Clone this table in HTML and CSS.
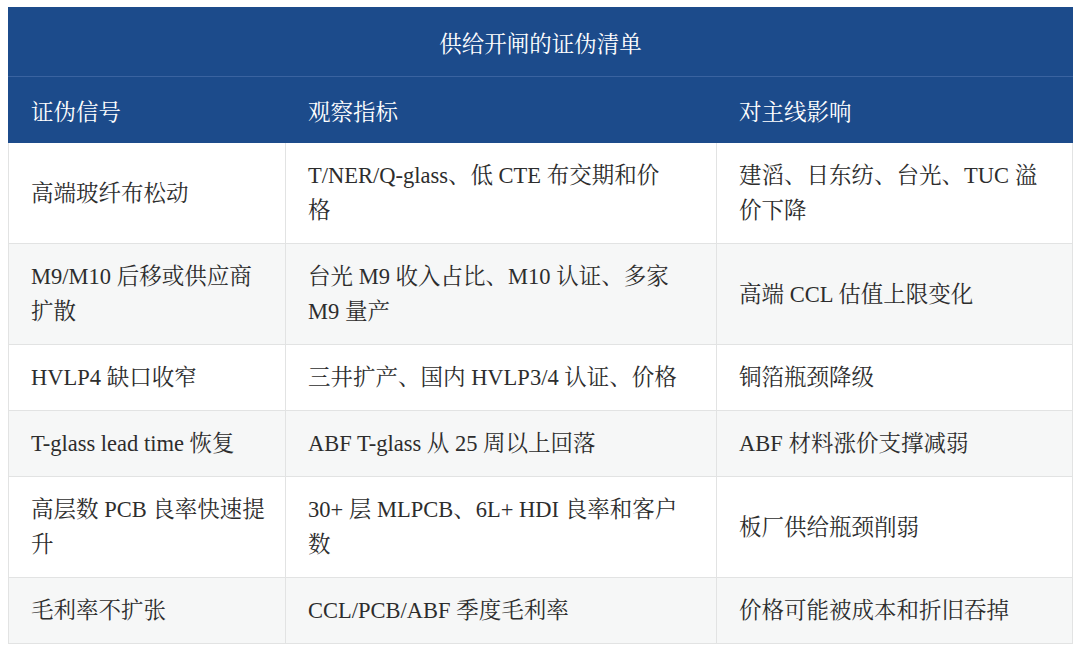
FILE: index.html
```html
<!DOCTYPE html>
<html lang="zh">
<head>
<meta charset="utf-8">
<link rel="stylesheet" href="styles.css">
</head>
<body>
<table class="tbl">
  <colgroup>
    <col class="c1"><col class="c2"><col class="c3">
  </colgroup>
  <thead>
    <tr class="title-row"><th colspan="3">供给开闸的证伪清单</th></tr>
    <tr class="head-row"><th>证伪信号</th><th>观察指标</th><th>对主线影响</th></tr>
  </thead>
  <tbody>
    <tr><td>高端玻纤布松动</td><td>T/NER/Q-glass、低 CTE 布交期和价格</td><td>建滔、日东纺、台光、TUC 溢价下降</td></tr>
    <tr><td>M9/M10 后移或供应商扩散</td><td>台光 M9 收入占比、M10 认证、多家 M9 量产</td><td>高端 CCL 估值上限变化</td></tr>
    <tr><td>HVLP4 缺口收窄</td><td>三井扩产、国内 HVLP3/4 认证、价格</td><td>铜箔瓶颈降级</td></tr>
    <tr><td>T-glass lead time 恢复</td><td>ABF T-glass 从 25 周以上回落</td><td>ABF 材料涨价支撑减弱</td></tr>
    <tr><td>高层数 PCB 良率快速提升</td><td>30+ 层 MLPCB、6L+ HDI 良率和客户数</td><td>板厂供给瓶颈削弱</td></tr>
    <tr><td>毛利率不扩张</td><td>CCL/PCB/ABF 季度毛利率</td><td>价格可能被成本和折旧吞掉</td></tr>
  </tbody>
</table>
</body>
</html>
```

FILE: styles.css
```css
html, body {
  margin: 0;
  padding: 0;
  background: #ffffff;
}
body {
  padding: 7px 8px;
  font-family: "Liberation Serif", "Noto Serif CJK SC", "Noto Sans CJK SC", serif;
  color: #2d2d2d;
}
.tbl {
  width: 1064px;
  border-collapse: collapse;
  table-layout: fixed;
  font-size: 22.5px;
}
.c1 { width: 277px; }
.c2 { width: 431px; }
.c3 { width: 356px; }
.tbl th {
  background: #1c4b8b;
  color: #ffffff;
  font-weight: normal;
  text-align: left;
}
.title-row th {
  height: 68px;
  padding: 0;
  text-align: center;
  border: 1px solid #1c4b8b;
  border-bottom: 1px solid #3a63a0;
}
.head-row th {
  height: 65px;
  padding: 0 22px;
  border: 1px solid #1c4b8b;
  border-left-color: #2b5795;
}
.head-row th:first-child { border-left-color: #1c4b8b; }
.tbl td {
  padding: 15px 22px 15px 22px;
  line-height: 35px;
  border: 1px solid #e2e3e3;
  vertical-align: middle;
}
.tbl td:nth-child(1) { padding-right: 18px; }
.tbl td:nth-child(2) { padding-right: 37px; }
.tbl tbody tr:nth-child(even) td {
  background: #f6f7f7;
}
.tbl tbody tr:nth-child(odd) td {
  background: #ffffff;
}
```
